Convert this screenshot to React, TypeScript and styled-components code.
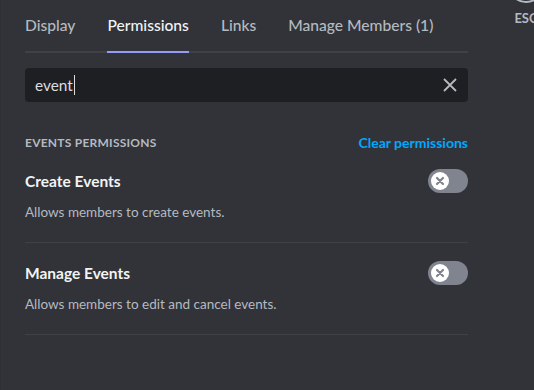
import React from "react";
import styled, { createGlobalStyle } from "styled-components";

const Global = createGlobalStyle`
  html, body { margin: 0; padding: 0; background: #313338; }
  body { font-family: "Lato", "Noto Sans", sans-serif; -webkit-font-smoothing: antialiased; }
  * { box-sizing: border-box; }
`;

const Page = styled.div`
  width: 534px;
  height: 390px;
  background: #313338;
  display: flex;
  overflow: hidden;
  border-left: 1px solid #2e3035;
`;

const Main = styled.div`
  width: 467px;
  flex-shrink: 0;
  padding-left: 24px;
  display: flex;
  flex-direction: column;
`;

const Side = styled.div`
  width: 26px;
  flex-shrink: 0;
  margin-left: 45px;
  display: flex;
  flex-direction: column;
  align-items: center;
`;

const EscCircle = styled.div`
  width: 36px;
  height: 36px;
  border-radius: 50%;
  border: 2px solid #b5bac1;
  margin-top: -33px;
  flex-shrink: 0;
`;

const EscLabel = styled.div`
  margin-top: 7px;
  font-size: 13px;
  font-weight: 700;
  color: #b5bac1;
  line-height: 16px;
  white-space: nowrap;
`;

const Tabs = styled.div`
  display: flex;
  gap: 32px;
  border-bottom: 2px solid #3f4147;
  margin-top: 15px;
`;

const Tab = styled.div<{ $active?: boolean }>`
  font-size: 15.6px;
  font-weight: 500;
  line-height: 20px;
  white-space: nowrap;
  padding-bottom: 16px;
  margin-bottom: -2px;
  color: ${(p) => (p.$active ? "#f2f3f5" : "#b5bac1")};
  border-bottom: 2px solid ${(p) => (p.$active ? "#949cf7" : "transparent")};
`;

const Search = styled.div`
  margin-top: 15px;
  height: 34px;
  background: #1e1f22;
  border-radius: 4px;
  display: flex;
  align-items: center;
  padding: 0 10px;
`;

const SearchText = styled.div`
  flex: 1;
  font-size: 15.4px;
  color: #dbdee1;
  display: flex;
  align-items: center;
`;

const Caret = styled.span`
  display: inline-block;
  width: 1px;
  height: 20px;
  background: #dbdee1;
  margin-left: 1px;
`;

const SectionHead = styled.div`
  margin-top: 32px;
  display: flex;
  justify-content: space-between;
  align-items: center;
`;

const SectionTitle = styled.div`
  font-size: 12px;
  font-weight: 700;
  color: #b5bac1;
  letter-spacing: 0.02em;
  text-transform: uppercase;
`;

const ClearLink = styled.div`
  font-size: 14px;
  font-weight: 700;
  color: #00a8fc;
`;

const Row = styled.div`
  padding-top: 18px;
  padding-bottom: 21px;
  border-bottom: 1px solid #3f4147;
`;

const RowTop = styled.div`
  display: flex;
  justify-content: space-between;
  align-items: center;
`;

const RowTitle = styled.div`
  font-size: 15.5px;
  font-weight: 700;
  color: #f2f3f5;
  line-height: 24px;
`;

const RowDesc = styled.div`
  margin-top: 10px;
  font-size: 13.5px;
  color: #b5bac1;
  line-height: 18px;
`;

const Track = styled.div`
  width: 40px;
  height: 24px;
  border-radius: 12px;
  background: #80848e;
  display: flex;
  align-items: center;
  padding-left: 3px;
`;

const Knob = styled.div`
  width: 18px;
  height: 18px;
  border-radius: 50%;
  background: #ffffff;
  display: flex;
  align-items: center;
  justify-content: center;
`;

const Toggle = () => (
  <Track>
    <Knob>
      <svg width="10" height="10" viewBox="0 0 10 10">
        <path d="M2 2 L8 8 M8 2 L2 8" stroke="#80848e" strokeWidth="2.2" strokeLinecap="round" />
      </svg>
    </Knob>
  </Track>
);

const perms = [
  { title: "Create Events", desc: "Allows members to create events." },
  { title: "Manage Events", desc: "Allows members to edit and cancel events." },
];

export default function App() {
  return (
    <>
      <Global />
      <Page>
        <Main>
          <Tabs>
            <Tab>Display</Tab>
            <Tab $active>Permissions</Tab>
            <Tab>Links</Tab>
            <Tab>Manage Members (1)</Tab>
          </Tabs>
          <Search>
            <SearchText>
              event<Caret />
            </SearchText>
            <svg width="16" height="16" viewBox="0 0 16 16">
              <path d="M2 2 L14 14 M14 2 L2 14" stroke="#b5bac1" strokeWidth="1.8" />
            </svg>
          </Search>
          <SectionHead>
            <SectionTitle>Events Permissions</SectionTitle>
            <ClearLink>Clear permissions</ClearLink>
          </SectionHead>
          {perms.map((p) => (
            <Row key={p.title}>
              <RowTop>
                <RowTitle>{p.title}</RowTitle>
                <Toggle />
              </RowTop>
              <RowDesc>{p.desc}</RowDesc>
            </Row>
          ))}
        </Main>
        <Side>
          <EscCircle />
          <EscLabel>ESC</EscLabel>
        </Side>
      </Page>
    </>
  );
}
